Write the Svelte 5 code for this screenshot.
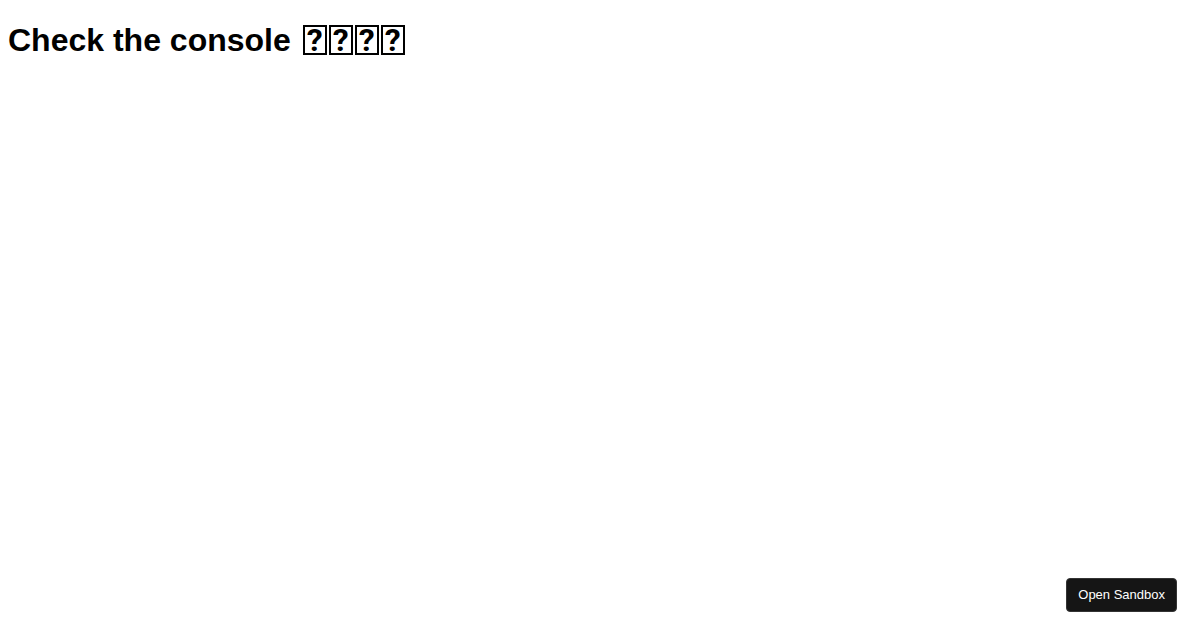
<script lang="ts">
  const sandboxUrl = '#sandbox';
  const marks = ['?', '?', '?', '?'];
</script>

<main>
  <h1>
    <span>Check the console</span>
    <span class="marks">
      {#each marks as mark}
        <span class="mark">{mark}</span>
      {/each}
    </span>
  </h1>
</main>

<a class="sandbox-link" href={sandboxUrl}>Open Sandbox</a>

<style>
  :global(body) {
    background: #fff;
  }

  main {
    padding: 0 8px;
  }

  h1 {
    display: flex;
    flex-wrap: wrap;
    align-items: center;
    gap: 12px;
    margin: 21px 0;
    color: #000;
    font-family: "Liberation Sans", Arial, sans-serif;
    font-size: 32px;
    font-weight: 700;
    line-height: 38px;
  }

  .marks {
    display: flex;
    gap: 2px;
  }

  .mark {
    box-sizing: border-box;
    display: flex;
    align-items: center;
    justify-content: center;
    width: 24px;
    height: 30px;
    border: 2px solid #000;
    font-family: Roboto, sans-serif;
    font-size: 32px;
    line-height: 26px;
  }

  .sandbox-link {
    position: fixed;
    right: 23px;
    bottom: 18px;
    box-sizing: border-box;
    padding: 8px 11px;
    border: 1px solid #343434;
    border-radius: 4px;
    background: #151515;
    color: #fff;
    font-family: "Liberation Sans", Arial, sans-serif;
    font-size: 13px;
    line-height: 16px;
    text-decoration: none;
  }
</style>
